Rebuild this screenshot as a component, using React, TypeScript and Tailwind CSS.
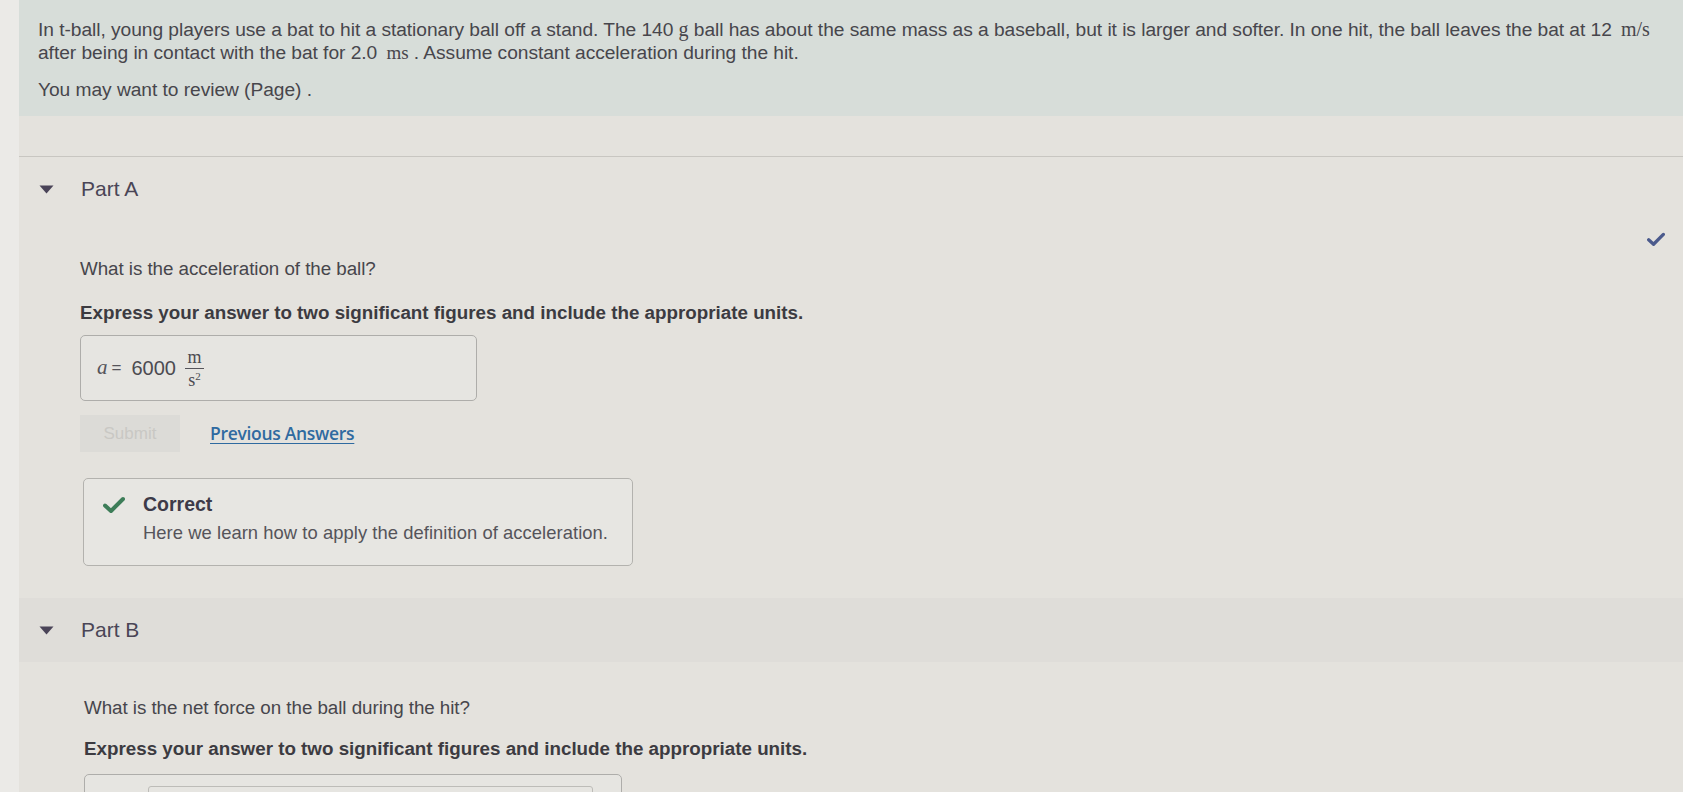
import React from "react";

const sans = { fontFamily: '"Liberation Sans", Arial, sans-serif' };
const serif = { fontFamily: '"Liberation Serif", "Times New Roman", serif' };

function Caret() {
  return (
    <svg width="15" height="9" viewBox="0 0 15 9" className="shrink-0">
      <path d="M0.5 0.5 L14.5 0.5 L7.5 8.5 Z" fill="#4a4458" />
    </svg>
  );
}

function Tick({ color, size = 22 }: { color: string; size?: number }) {
  return (
    <svg width={size} height={size * 0.8} viewBox="0 0 22 17.6">
      <path d="M2 9.5 L8 15 L20 3" fill="none" stroke={color} strokeWidth="4" strokeLinecap="round" strokeLinejoin="round" />
    </svg>
  );
}

function PartHeader({ label }: { label: string }) {
  return (
    <div className="h-[64px] flex items-center pl-[20px]">
      <Caret />
      <span className="ml-[27px] text-[21px] text-[#4a4556]" style={sans}>
        {label}
      </span>
    </div>
  );
}

export default function App() {
  return (
    <div className="w-full h-[792px] overflow-hidden flex bg-[#e4e2dd] text-[#47464c]" style={sans}>
      <div className="w-[19px] shrink-0 bg-[#ebeae7]" />
      <div className="flex-1 min-w-0">
        {/* problem statement */}
        <div className="h-[116px] bg-[#d7ddd9] pl-[19px] pr-[10px] pt-[18px] text-[19.2px] leading-[22.5px] tracking-[-0.05px]">
          <p className="whitespace-nowrap">
            In t-ball, young players use a bat to hit a stationary ball off a stand. The 140{" "}
            <span style={serif} className="text-[20px]">g</span> ball has about the same mass as a baseball, but it is larger and softer. In one hit, the ball leaves the bat at 12{" "}
            <span style={serif} className="text-[20px] ml-[4px]">m/s</span>
          </p>
          <p className="whitespace-nowrap">
            after being in contact with the bat for 2.0{" "}
            <span style={serif} className="text-[19px] ml-[4px]">ms</span> . Assume constant acceleration during the hit.
          </p>
          <p className="mt-[15px]">You may want to review (Page) .</p>
        </div>

        <div className="mt-[40px] border-t border-[#c8c6c1]" />

        {/* Part A */}
        <PartHeader label="Part A" />
        <div className="h-[37px] flex items-center justify-end pr-[18px]">
          <Tick color="#4b5a8c" size={18} />
        </div>
        <div className="pl-[61px]">
          <p className="text-[18.8px] leading-[22px] tracking-[-0.05px]">What is the acceleration of the ball?</p>
          <p className="mt-[22px] text-[18.8px] leading-[22px] font-bold text-[#3c3b41]">
            Express your answer to two significant figures and include the appropriate units.
          </p>
          <div className="mt-[11px] w-[397px] h-[66px] rounded-[5px] border border-[#aeadaa] bg-[#e6e5e1] flex items-center pl-[16px]">
            <span style={serif} className="italic text-[21px] text-[#55545a]">a</span>
            <span className="ml-[4px] text-[17px] text-[#55545a]">=</span>
            <span className="ml-[10px] text-[20px] text-[#4c4b51]">6000</span>
            <span className="ml-[9px] flex flex-col items-center text-[#4c4b51] leading-none" style={serif}>
              <span className="text-[18px] px-[1px]">m</span>
              <span className="w-[19px] border-t border-[#55545a] my-[2px]" />
              <span className="text-[18px]">
                s<sup className="text-[11px]">2</sup>
              </span>
            </span>
          </div>
          <div className="mt-[14px] flex items-center">
            <div className="w-[100px] h-[37px] bg-[#dcdbd7] flex items-center justify-center text-[17px] text-[#c9c8c4]">
              Submit
            </div>
            <a
              className="ml-[30px] text-[17.5px] font-semibold text-[#2f6aa0] underline underline-offset-[3px] tracking-[-0.3px]"
              style={{ fontFamily: '"Open Sans", sans-serif' }}
            >
              Previous Answers
            </a>
          </div>
          <div className="mt-[26px] ml-[3px] w-[550px] h-[88px] rounded-[5px] border border-[#b3b2ae] bg-[#e7e6e2] flex items-start pt-[14px] pl-[19px]">
            <div className="mt-[3px]">
              <Tick color="#3d7d58" size={22} />
            </div>
            <div className="ml-[18px]">
              <p className="text-[19.5px] leading-[23px] font-bold text-[#3d3a48]">Correct</p>
              <p className="mt-[5px] text-[18.4px] leading-[23px] text-[#55545a] tracking-[0.05px]">
                Here we learn how to apply the definition of acceleration.
              </p>
            </div>
          </div>
        </div>

        {/* Part B */}
        <div className="mt-[32px] bg-[#dfddd9]">
          <PartHeader label="Part B" />
        </div>
        <div className="pl-[65px]">
          <p className="mt-[35px] text-[18.8px] leading-[22px] tracking-[-0.05px]">What is the net force on the ball during the hit?</p>
          <p className="mt-[19px] text-[18.8px] leading-[22px] font-bold text-[#3c3b41]">
            Express your answer to two significant figures and include the appropriate units.
          </p>
          <div className="mt-[14px] w-[538px] h-[60px] rounded-[5px] border border-[#aeadaa] bg-[#e6e5e1] pl-[63px] pt-[11px]">
            <div className="w-[445px] h-[40px] rounded-[3px] border border-[#bdbcb8]" />
          </div>
        </div>
      </div>
    </div>
  );
}
